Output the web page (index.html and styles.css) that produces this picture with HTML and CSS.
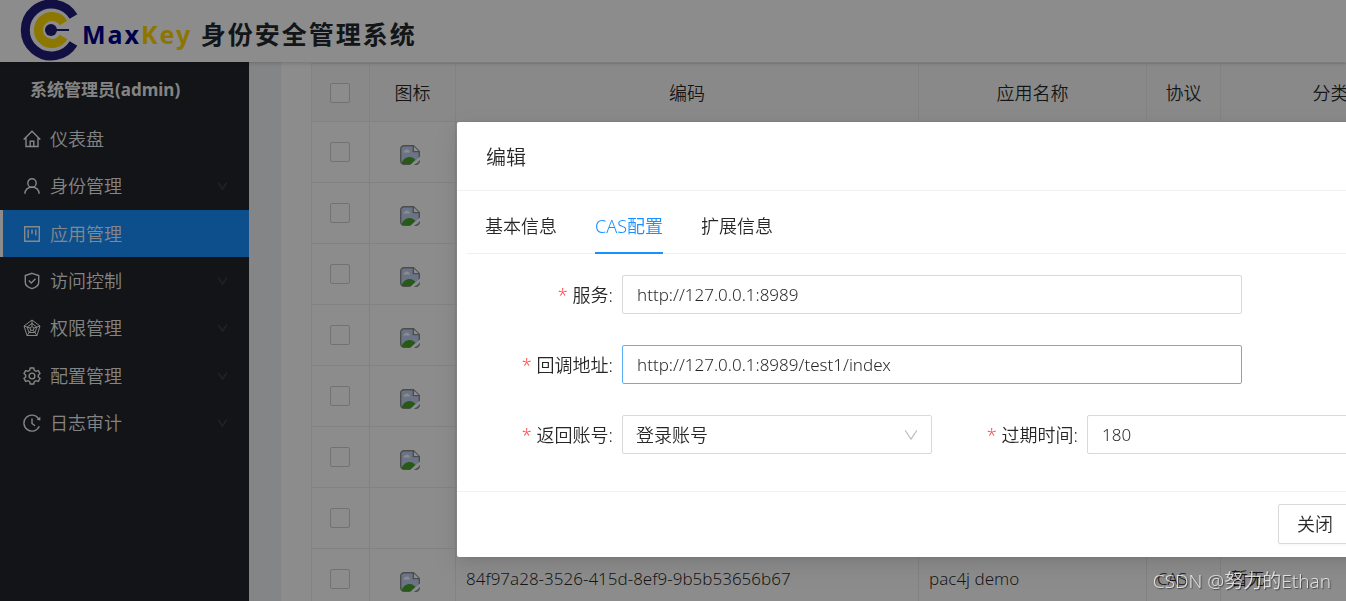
FILE: index.html
```html
<!DOCTYPE html>
<html lang="zh-CN">
<head>
<meta charset="utf-8">
<title>MaxKey 身份安全管理系统</title>
<link rel="stylesheet" href="styles.css">
</head>
<body>
<svg width="0" height="0" class="sprite" aria-hidden="true">
  <symbol id="chevron" viewBox="0 0 12 12"><path d="M1 2l5 7.500L11 2"/></symbol>
  <symbol id="broken" viewBox="0 0 20 20">
    <path d="M4 .7h9.500l5.800 5.800V16a3.300 3.300 0 0 1-3.300 3.300H4A3.300 3.300 0 0 1 .7 16V4A3.300 3.300 0 0 1 4 .7z" fill="#c3d4f5" stroke="#8b8b8b" stroke-width="1.400"/>
    <path d="M13.300 1v5.600H19" fill="#fff" stroke="#8b8b8b" stroke-width="1.400"/>
    <path d="M3.500 7.500a1.800 1.800 0 0 1 1.600-2 2.300 2.300 0 0 1 4 .3 1.500 1.500 0 0 1 .7 1.700z" fill="#fff"/>
    <path d="M1.500 18.500C3 14 6.500 12 9.500 12s5 1.500 6 3l-4 4H3z" fill="#4aa32e"/>
    <path d="M10 20 20 11.500v3.500L14 20z" fill="#fff"/>
  </symbol>
</svg>
<header class="header">
  <a class="brand" href="#">
    <svg class="logo" viewBox="0 0 60 62" aria-hidden="true">
      <path d="M53.500 16.500A26 26 0 1 0 53.500 43.500" fill="none" stroke="#221d78" stroke-width="9"/>
      <path d="M43.500 23A13.500 13.500 0 1 0 43.500 37" fill="none" stroke="#ffd900" stroke-width="9"/>
      <circle cx="31" cy="30" r="6" fill="#221d78"/><path d="M31 30h18" stroke="#221d78" stroke-width="2"/>
    </svg>
    <span class="brand-text"><span class="max">Max</span><span class="key">Key</span> 身份安全管理系统</span>
  </a>
</header>
<div class="layout">
  <aside class="sidebar">
    <div class="user">系统管理员(admin)</div>
    <nav class="menu">
      <a href="#"><svg class="icon" viewBox="0 0 18 18"><path d="M.7 9.500 9 1.300l8.300 8.200M3 8v8.500h12V8M7.200 16.500v-5.300h3.600v5.300"/></svg>仪表盘</a>
      <a href="#"><svg class="icon" viewBox="0 0 18 18"><circle cx="9" cy="6" r="4.200"/><path d="M1.800 16.800C2.200 12.800 5 10.200 9 10.200s6.800 2.600 7.200 6.600"/></svg>身份管理<svg class="arrow"><use href="#chevron"/></svg></a>
      <a href="#" class="active"><svg class="icon" viewBox="0 0 18 18"><path d="M1.700 1.700h14.600v14.600H1.700z"/><path d="M5.200 4.500v8.500M9 4.500v4.500M12.800 4.500v6"/></svg>应用管理</a>
      <a href="#"><svg class="icon" viewBox="0 0 18 18"><path d="M9 1.300 15.700 3.500v7C15.700 13.500 12.500 15.500 9 16.700 5.500 15.500 2.300 13.500 2.300 10.500v-7z"/><path d="m5.800 8.500 2.500 2.500 4.200-4.300"/></svg>访问控制<svg class="arrow"><use href="#chevron"/></svg></a>
      <a href="#"><svg class="icon thin" viewBox="0 0 18 18"><path d="M9 1 17 7l-3 9.500H4L1 7zM9 4.500l4.800 3.500L12 13.500H6L4.200 8zM9 7.500l2 1.500-.8 2.300H7.800L7 9zM9 1v6.500M17 7l-6 2M1 7l6 2M14 16.500l-3.800-5.200M4 16.500l3.800-5.200"/></svg>权限管理<svg class="arrow"><use href="#chevron"/></svg></a>
      <a href="#"><svg class="icon" viewBox="0 0 18 18"><circle cx="9" cy="9" r="2.900"/><path d="M7.300 1h3.400l.6 2.300 1.700 1 2.300-.7L17 6.500 15.300 8.200v1.700L17 11.500l-1.700 2.900-2.300-.7-1.700 1-.6 2.300H7.300l-.6-2.300-1.700-1-2.300.7L1 11.500l1.700-1.600V8.200L1 6.500l1.700-2.900 2.300.7 1.700-1z"/></svg>配置管理<svg class="arrow"><use href="#chevron"/></svg></a>
      <a href="#"><svg class="icon" viewBox="0 0 18 18"><path d="M15.700 4.800A8 8 0 1 0 16.300 12.300M9 4.500v5l3 2.300"/><path d="M17.300 2.800v3.600l-3.600-.6z" fill="currentColor" stroke="none"/></svg>日志审计<svg class="arrow"><use href="#chevron"/></svg></a>
    </nav>
  </aside>
  <main class="content">
    <div class="card">
      <table class="grid">
        <colgroup><col class="c-check"><col class="c-icon"><col class="c-code"><col class="c-name"><col class="c-proto"><col class="c-type"></colgroup>
        <thead><tr><th><input type="checkbox" aria-label="全选"></th><th>图标</th><th>编码</th><th>应用名称</th><th>协议</th><th>分类</th></tr></thead>
        <tbody>
          <tr><td><input type="checkbox" aria-label="选择"></td><td><svg class="pic"><use href="#broken"/></svg></td><td></td><td></td><td></td><td></td></tr>
          <tr><td><input type="checkbox" aria-label="选择"></td><td><svg class="pic"><use href="#broken"/></svg></td><td></td><td></td><td></td><td></td></tr>
          <tr><td><input type="checkbox" aria-label="选择"></td><td><svg class="pic"><use href="#broken"/></svg></td><td></td><td></td><td></td><td></td></tr>
          <tr><td><input type="checkbox" aria-label="选择"></td><td><svg class="pic"><use href="#broken"/></svg></td><td></td><td></td><td></td><td></td></tr>
          <tr><td><input type="checkbox" aria-label="选择"></td><td><svg class="pic"><use href="#broken"/></svg></td><td></td><td></td><td></td><td></td></tr>
          <tr><td><input type="checkbox" aria-label="选择"></td><td><svg class="pic"><use href="#broken"/></svg></td><td></td><td></td><td></td><td></td></tr>
          <tr><td><input type="checkbox" aria-label="选择"></td><td></td><td></td><td></td><td></td><td></td></tr>
          <tr><td><input type="checkbox" aria-label="选择"></td><td><svg class="pic"><use href="#broken"/></svg></td><td>84f97a28-3526-415d-8ef9-9b5b53656b67</td><td>pac4j demo</td><td>CAS</td><td>暂无</td></tr>
        </tbody>
      </table>
    </div>
  </main>
</div>
<div class="mask">
  <section class="modal" role="dialog" aria-labelledby="dlg-title">
    <h2 class="modal-title" id="dlg-title">编辑</h2>
    <div class="modal-body">
      <div class="tabs" role="tablist">
        <button type="button" role="tab">基本信息</button>
        <button type="button" role="tab" class="on" aria-selected="true">CAS配置</button>
        <button type="button" role="tab">扩展信息</button>
      </div>
      <form class="form">
        <label for="service">服务:</label>
        <input class="wide" id="service" type="text" value="http://127.0.0.1:8989">
        <label for="callback">回调地址:</label>
        <input class="wide focused" id="callback" type="text" value="http://127.0.0.1:8989/test1/index">
        <label for="account">返回账号:</label>
        <div class="select"><select id="account"><option>登录账号</option></select><svg class="caret"><use href="#chevron"/></svg></div>
        <label for="expires">过期时间:</label>
        <input id="expires" type="text" value="180">
      </form>
    </div>
    <div class="modal-footer"><button type="button">关闭</button></div>
  </section>
</div>
<div class="watermark">CSDN @努力的Ethan</div>
</body>
</html>
```
FILE: styles.css
```css
* { box-sizing: border-box; }
body {
  margin: 0;
  height: 100vh;
  overflow: hidden;
  display: flex;
  flex-direction: column;
  background: #f0f2f5;
  color: rgba(0, 0, 0, .85);
  font: 350 17px/26px "Noto Sans", "Noto Sans CJK SC", sans-serif;
}
button, input, select { font: inherit; color: inherit; }
a { color: inherit; text-decoration: none; }
.sprite { position: absolute; }

.header {
  position: relative;
  z-index: 1;
  flex: none;
  height: 62px;
  background: #fff;
  box-shadow: 0 1px 4px rgba(0, 21, 41, .2);
}
.brand { display: inline-flex; align-items: flex-start; padding-left: 20px; }
.logo { width: 60px; height: 62px; }
.brand-text {
  padding: 16px 0 0 2px;
  font-size: 25px;
  line-height: 36px;
  font-weight: 700;
  letter-spacing: 2px;
  color: #24292e;
  white-space: nowrap;
}
.max { color: #00008b; }
.key { color: #ffd700; }

.layout { flex: 1; min-height: 0; display: flex; }
.sidebar { flex: none; width: 249px; background: #22252a; color: rgba(255, 255, 255, .95); }
.user { padding: 15px 30px 12px; font-weight: 700; }
.menu { display: grid; grid-template-rows: repeat(7, 1fr); height: 332px; font-size: 18px; }
.menu a { display: flex; align-items: center; gap: 9px; padding: 0 21px 0 20px; border-left: 3px solid transparent; }
.menu .active { background: #1890ff; border-left-color: #fff; }
.icon { width: 18px; height: 18px; fill: none; stroke: currentColor; stroke-width: 1.4; }
.thin { stroke-width: 1; }
.arrow { width: 11px; height: 10px; margin-left: auto; fill: none; stroke: #3a3d41; stroke-width: 2; }

.content { flex: 1; min-width: 0; padding-left: 31px; overflow: hidden; }
.card { height: 100%; padding: 1px 0 0 30px; background: #fff; border-left: 1px solid #f0f0f0; }
.grid { table-layout: fixed; width: 1130px; border-collapse: separate; border-spacing: 0; border-left: 1px solid #ededed; }
.grid th, .grid td { height: 61px; padding: 0 10px; border-right: 1px solid #ededed; border-bottom: 1px solid #ededed; text-align: left; }
.grid th { height: 59px; background: #fafafa; font-weight: 350; font-size: 18px; text-align: center; border-top: 1px solid #ededed; }
.grid td:nth-child(-n+2) { text-align: center; }
.c-check { width: 58px; }
.c-icon { width: 86px; }
.c-code { width: 463px; }
.c-name { width: 228px; }
.c-proto { width: 74px; }
.grid tr > :first-child { padding: 0 18px; }
.grid input { appearance: none; display: block; width: 20px; height: 20px; margin: 0; border: 1px solid #d0d0d0; border-radius: 2px; background: #fff; }
.pic { display: block; width: 20px; height: 20px; margin: 5px 0 0 20px; }

.mask { position: fixed; inset: 0; z-index: 2; overflow: hidden; background: rgba(0, 0, 0, .45); }
.modal {
  width: 996px;
  margin: 122px 0 0 457px;
  background: #fff;
  border-radius: 2px;
  box-shadow: 0 3px 6px -4px rgba(0, 0, 0, .12), 0 6px 16px rgba(0, 0, 0, .08), 0 9px 28px 8px rgba(0, 0, 0, .05);
}
.modal-title { margin: 0; padding: 23px 29px 19px; border-bottom: 1px solid #f0f0f0; font-size: 20px; font-weight: 350; }
.modal-body { padding: 0 10px; }
.tabs { display: flex; gap: 38px; padding: 0 18px; border-bottom: 1px solid #f0f0f0; font-size: 18px; }
.tabs button { margin-bottom: -1px; padding: 22px 0 13px; border: 0; border-bottom: 2px solid transparent; background: none; }
.tabs .on { color: #1890ff; border-color: #1890ff; }
.form { display: grid; grid-template-columns: 155px 310px 155px 310px; row-gap: 31px; align-items: center; padding: 21px 0 37px; }
.form label { padding-right: 9px; text-align: right; font-size: 18px; }
.form label::before { content: "*"; margin-right: 5px; color: #ff4d4f; }
.form input, .form select { width: 100%; height: 39px; padding: 0 14px; border: 1px solid #d9d9d9; border-radius: 2px; background: #fff; outline: 0; }
.form .wide { grid-column: span 3; width: 620px; }
.form .focused { border-color: #5cb0f8; }
.select { display: grid; align-items: center; }
.form select { grid-area: 1 / 1; appearance: none; font-size: 18px; padding: 0 13px; }
.caret { grid-area: 1 / 1; justify-self: end; width: 14px; height: 14px; margin-right: 14px; fill: none; stroke: #bfbfbf; stroke-width: 1; pointer-events: none; }
.modal-footer { display: flex; justify-content: flex-end; padding: 12px 101px 13px; border-top: 1px solid #f0f0f0; }
.modal-footer button { height: 40px; padding: 0 18px; border: 1px solid #d9d9d9; border-radius: 2px; background: #fff; font-size: 18px; box-shadow: 0 2px 0 rgba(0, 0, 0, .02); }

.watermark { position: fixed; z-index: 3; right: 15px; bottom: 7px; font-size: 19px; color: rgba(255, 255, 255, .75); text-shadow: 1px 1px 1px rgba(0, 0, 0, .5); }
```
